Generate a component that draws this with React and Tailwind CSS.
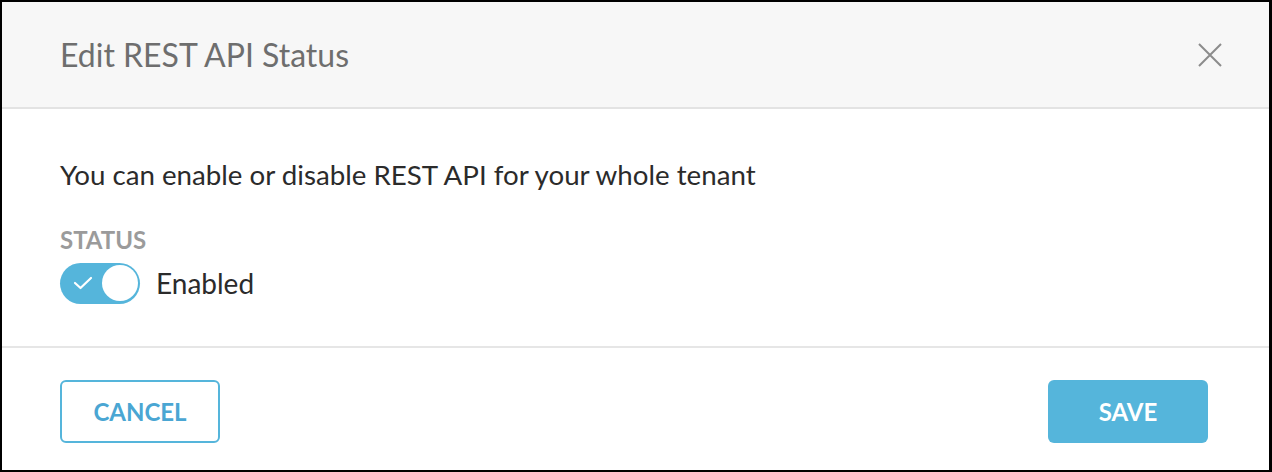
import React from "react";

export default function App() {
  return (
    <div
      className="w-[1272px] h-[472px] bg-black pl-[2px] pr-[3px] py-[2px]"
      style={{ fontFamily: "Lato, 'Open Sans', sans-serif" }}
    >
      <div className="w-full h-full bg-white flex flex-col">
        <div className="h-[107px] bg-[#f7f7f7] border-b-2 border-[#e3e3e3] flex items-center justify-between pl-[58px] pr-[47px]">
          <h1 className="text-[32px] text-[#6e6e6e] leading-none">Edit REST API Status</h1>
          <button className="w-[24px] h-[24px] flex items-center justify-center">
            <svg width="24" height="24" viewBox="0 0 24 24" fill="none" stroke="#8c8c8c" strokeWidth="2">
              <path d="M1 1 L23 23 M23 1 L1 23" />
            </svg>
          </button>
        </div>

        <div className="flex-1 pl-[58px] pt-[52px]">
          <p className="text-[27.7px] text-[#2b2b2b] leading-none">You can enable or disable REST API for your whole tenant</p>
          <div className="mt-[39px] text-[24px] font-bold text-[#9b9b9b] leading-none">STATUS</div>
          <div className="mt-[11px] flex items-center gap-[16px]">
            <div className="w-[80px] h-[41px] rounded-full bg-[#55b5db] flex items-center justify-between pl-[13px] pr-[2px]">
              <svg width="20" height="16" viewBox="0 0 20 16" fill="none" stroke="white" strokeWidth="2.2" strokeLinecap="round" strokeLinejoin="round">
                <path d="M2 8 L7.5 13 L18 3" />
              </svg>
              <div className="w-[36px] h-[36px] rounded-full bg-white" />
            </div>
            <span className="text-[28px] text-[#2b2b2b] leading-none">Enabled</span>
          </div>
        </div>

        <div className="h-[124px] border-t-2 border-[#e6e6e6] flex items-start justify-between pl-[58px] pr-[61px] pt-[32px]">
          <button className="w-[160px] h-[63px] rounded-[6px] border-2 border-[#55b5db] text-[#4aa6d3] font-bold text-[24px]">
            CANCEL
          </button>
          <button className="w-[160px] h-[63px] rounded-[6px] bg-[#55b5db] text-white font-bold text-[24px]">
            SAVE
          </button>
        </div>
      </div>
    </div>
  );
}
